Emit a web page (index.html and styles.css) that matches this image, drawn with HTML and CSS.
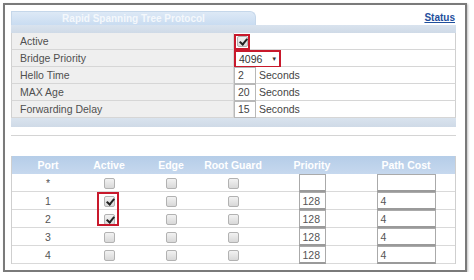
FILE: index.html
```html
<!DOCTYPE html>
<html lang="en">
<head>
    <meta charset="UTF-8">
    <title>Rapid Spanning Tree Protocol</title>
    <link rel="stylesheet" href="styles.css">
</head>
<body>
    <div class="frame">
        <div class="tabbar">
            <div class="tab">Rapid Spanning Tree Protocol</div>
            <a class="status" href="#">Status</a>
        </div>

        <div class="strip"></div>
        <div class="row">
            <div class="label">Active</div>
            <div class="value"><span class="mark"><span class="cb checked"></span></span></div>
        </div>
        <div class="row">
            <div class="label">Bridge Priority</div>
            <div class="value"><span class="select">4096 <span class="arrow">&#9660;</span></span></div>
        </div>
        <div class="row">
            <div class="label">Hello Time</div>
            <div class="value"><span class="num">2</span><span class="unit">Seconds</span></div>
        </div>
        <div class="row">
            <div class="label">MAX Age</div>
            <div class="value"><span class="num">20</span><span class="unit">Seconds</span></div>
        </div>
        <div class="row">
            <div class="label">Forwarding Delay</div>
            <div class="value"><span class="num">15</span><span class="unit">Seconds</span></div>
        </div>
        <div class="strip bottom"></div>

        <div class="divider"></div>

        <div class="ports">
            <div class="prow head">
                <div>Port</div><div>Active</div><div>Edge</div><div>Root Guard</div><div>Priority</div><div>Path Cost</div><div></div>
            </div>
            <div class="prow">
                <div>*</div><div><span class="cb"></span></div><div><span class="cb"></span></div><div><span class="cb"></span></div>
                <div><span class="box pri"></span></div><div><span class="box cost"></span></div><div></div>
            </div>
            <div class="prow">
                <div>1</div><div><span class="cb checked"></span></div><div><span class="cb"></span></div><div><span class="cb"></span></div>
                <div><span class="box pri">128</span></div><div><span class="box cost">4</span></div><div></div>
            </div>
            <div class="prow">
                <div>2</div><div><span class="cb checked"></span></div><div><span class="cb"></span></div><div><span class="cb"></span></div>
                <div><span class="box pri">128</span></div><div><span class="box cost">4</span></div><div></div>
            </div>
            <div class="prow">
                <div>3</div><div><span class="cb"></span></div><div><span class="cb"></span></div><div><span class="cb"></span></div>
                <div><span class="box pri">128</span></div><div><span class="box cost">4</span></div><div></div>
            </div>
            <div class="prow">
                <div>4</div><div><span class="cb"></span></div><div><span class="cb"></span></div><div><span class="cb"></span></div>
                <div><span class="box pri">128</span></div><div><span class="box cost">4</span></div><div></div>
            </div>
            <div class="highlight"></div>
        </div>
    </div>
</body>
</html>
```

FILE: styles.css
```css
body {
    margin: 0;
    background: #ffffff;
    font-family: "Liberation Sans", Arial, sans-serif;
    font-size: 10.5px;
    color: #555;
}
.frame {
    margin: 3px 0 0 3px;
    width: 464px;
    height: 269px;
    box-sizing: border-box;
    border: 2px solid #7a7a7a;
    padding: 6px 9px 0 6px;
    box-shadow: 1px 1px 2px rgba(0,0,0,0.25);
}
.tabbar {
    display: flex;
    justify-content: space-between;
    align-items: flex-end;
    height: 14px;
}
.tab {
    width: 245px;
    height: 14px;
    box-sizing: border-box;
    border: 1px solid #c5d7ea;
    border-bottom: none;
    border-radius: 0 6px 0 0;
    background: linear-gradient(#dde9f6, #c9dcf1);
    color: #f4f8fc;
    font-weight: bold;
    font-size: 10px;
    text-align: center;
    line-height: 13px;
}
.status {
    color: #1f4f9c;
    font-weight: bold;
    font-size: 10px;
    margin-bottom: 2px;
    margin-right: 1px;
}
.strip {
    height: 8px;
    background: linear-gradient(#d9e3ee, #cfdae7);
}
.strip.bottom {
    height: 9px;
}
.row {
    display: flex;
    height: 16px;
    border-bottom: 1px solid #d6d6d6;
    border-left: 1px solid #d0d0d0;
    border-right: 1px solid #d0d0d0;
}
.label {
    width: 222px;
    background: #efefef;
    border-right: 1px solid #d6d6d6;
    padding-left: 8px;
    box-sizing: border-box;
    line-height: 16px;
    color: #505050;
}
.value {
    flex: 1;
    display: flex;
    align-items: center;
    background: #fff;
    color: #444;
}
.mark {
    display: flex;
    align-items: center;
    justify-content: center;
    width: 16px;
    height: 16px;
    box-sizing: border-box;
    border: 2px solid #c8192c;
    margin-top: 1px;
}
.cb {
    display: inline-block;
    width: 9px;
    height: 9px;
    border: 1px solid #b2b2b2;
    border-radius: 2px;
    background: linear-gradient(#f2f2f2, #d8d8d8);
    position: relative;
}
.cb.checked::after {
    content: "";
    position: absolute;
    left: 3px;
    top: 0px;
    width: 3px;
    height: 6px;
    border: solid #222;
    border-width: 0 2px 2px 0;
    transform: rotate(40deg);
}
.select {
    display: flex;
    align-items: center;
    width: 47px;
    height: 18px;
    box-sizing: border-box;
    border: 2px solid #c8192c;
    padding-left: 3px;
    margin-top: 1px;
    color: #333;
}
.arrow {
    font-size: 6px;
    margin-left: 9px;
}
.num {
    width: 22px;
    height: 17px;
    box-sizing: border-box;
    border: 1px solid #b8b8b8;
    padding-left: 3px;
    line-height: 15px;
    margin-top: 1px;
}
.unit {
    padding-left: 3px;
}
.divider {
    margin-top: 8px;
    height: 1px;
    background: #d4d4d4;
}
.ports {
    position: relative;
    margin-top: 20px;
    border-left: 1px solid #cfcfcf;
    border-right: 1px solid #cfcfcf;
}
.prow {
    display: grid;
    grid-template-columns: 72px 50px 74px 50px 108px 80px 1fr;
    height: 17px;
    border-bottom: 1px solid #d9d9d9;
    align-items: center;
}
.prow > div {
    display: flex;
    justify-content: center;
    align-items: center;
    height: 100%;
    white-space: nowrap;
}
.prow.head {
    height: 18px;
    border-bottom: none;
    background: linear-gradient(#b5cde8, #c6d8ee);
    color: #fff;
    font-weight: bold;
    font-size: 10.5px;
}
.box {
    box-sizing: border-box;
    height: 18px;
    border: 1px solid #aaa;
    border-bottom: 2px solid #9a9a9a;
    background: #fff;
    padding-left: 3px;
    line-height: 16px;
    color: #555;
}
.box.pri {
    width: 27px;
}
.box.cost {
    width: 59px;
}
.highlight {
    position: absolute;
    left: 85px;
    top: 36px;
    width: 22px;
    height: 34px;
    box-sizing: border-box;
    border: 2px solid #c8192c;
}
```
